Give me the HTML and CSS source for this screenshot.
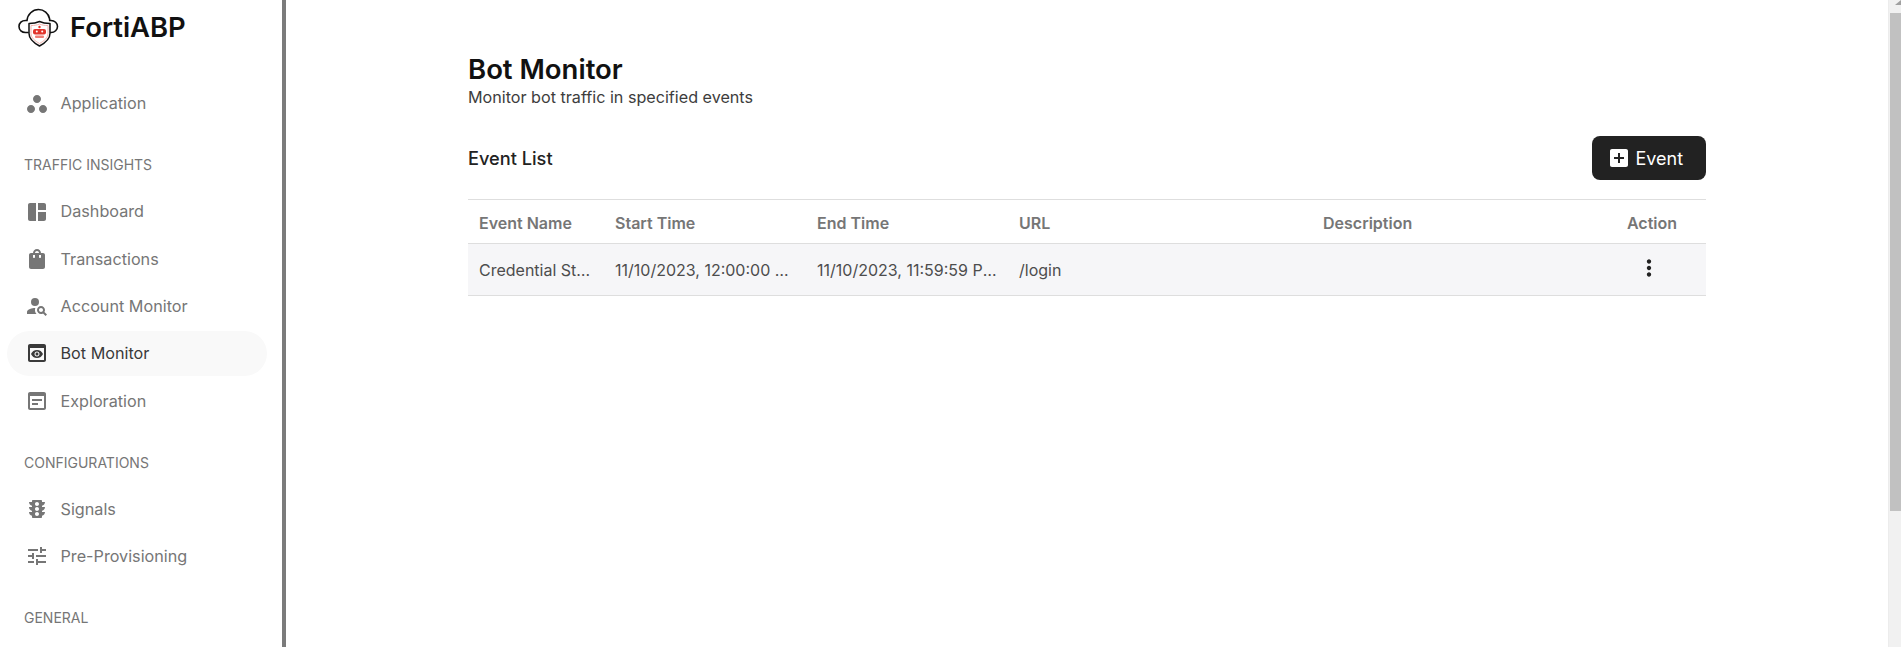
FILE: index.html
```html
<!DOCTYPE html>
<html lang="en">
<head>
<meta charset="utf-8">
<title>FortiABP - Bot Monitor</title>
<link rel="stylesheet" href="styles.css">
</head>
<body>
<div class="app">
  <aside class="sidebar">
    <div class="brand">
      <svg class="brand-logo" viewBox="0 0 41 39">
        <path class="cloud" d="M10 24.500H7.500C3.800 24.500 1 22 1 18.500S3.800 12.500 7.500 12.500H9C9.500 6.500 14.500 1.500 20.500 1.500c5.500 0 10 3.800 11 9 .1.700.2 1.300.2 2H33c3.700 0 6.500 2.700 6.500 6s-2.800 6-6.500 6h-.5"/>
        <path class="shield" d="M11 15.500c4 0 7.500-.5 10.500-2 3 1.500 6.500 2 10.500 2v10c0 5.500-5 9.500-10.500 12.500C16 35 11 31 11 25.500z"/>
        <path class="shield-inner" d="M13 17.500c3.500 0 6-.4 8.500-1.500 2.500 1.100 5 1.500 8.500 1.500v8c0 4.300-4 7.500-8.500 10-4.500-2.500-8.500-5.700-8.500-10z"/>
        <rect class="bot" x="15" y="21" width="13" height="5.500" rx="2"/>
        <circle class="bot" cx="21.500" cy="19" r="1.200"/>
        <rect class="bot-chin" x="17" y="27.500" width="9" height="2.600" rx="1"/>
        <circle class="bot-eye" cx="18.800" cy="23.500" r="1"/>
        <circle class="bot-eye" cx="24.200" cy="23.500" r="1"/>
      </svg>
      <span class="brand-name">FortiABP</span>
    </div>

    <nav class="nav">
      <a class="nav-item">
        <svg class="nav-icon" viewBox="0 0 24 24"><path d="M6 13c-2.200 0-4 1.800-4 4s1.800 4 4 4 4-1.800 4-4-1.800-4-4-4zm12 0c-2.200 0-4 1.800-4 4s1.800 4 4 4 4-1.800 4-4-1.800-4-4-4zm-6-10C9.800 3 8 4.800 8 7s1.800 4 4 4 4-1.800 4-4-1.800-4-4-4z"/></svg>
        <span>Application</span>
      </a>

      <div class="nav-heading">TRAFFIC INSIGHTS</div>
      <a class="nav-item">
        <svg class="nav-icon" viewBox="0 0 24 24"><path d="M11 21H5c-1.100 0-2-.9-2-2V5c0-1.100.9-2 2-2h6v18zm2 0h6c1.100 0 2-.9 2-2v-7h-8v9zm8-11V5c0-1.100-.9-2-2-2h-6v7h8z"/></svg>
        <span>Dashboard</span>
      </a>
      <a class="nav-item">
        <svg class="nav-icon" viewBox="0 0 24 24"><path d="M18 6h-2c0-2.210-1.790-4-4-4S8 3.790 8 6H6c-1.100 0-2 .9-2 2v12c0 1.100.9 2 2 2h12c1.100 0 2-.9 2-2V8c0-1.100-.9-2-2-2zm-8 4c0 .55-.45 1-1 1s-1-.45-1-1V8h2v2zm2-6c1.100 0 2 .9 2 2h-4c0-1.100.9-2 2-2zm4 6c0 .55-.45 1-1 1s-1-.45-1-1V8h2v2z"/></svg>
        <span>Transactions</span>
      </a>
      <a class="nav-item">
        <svg class="nav-icon" viewBox="0 0 24 24"><circle cx="10" cy="8" r="4"/><path d="M10.350 14.010C7.620 13.910 2 15.270 2 18v2h9.540c-2.470-2.760-1.230-5.890-1.190-5.990z"/><path d="M19.430 18.020c.36-.59.57-1.280.57-2.020 0-2.210-1.790-4-4-4s-4 1.790-4 4 1.790 4 4 4c.74 0 1.430-.22 2.020-.57L20.590 22 22 20.590l-2.570-2.570zM16 18c-1.100 0-2-.9-2-2s.9-2 2-2 2 .9 2 2-.9 2-2 2z"/></svg>
        <span>Account Monitor</span>
      </a>
      <a class="nav-item is-active">
        <svg class="nav-icon" viewBox="0 0 24 24"><path d="M19 3H5c-1.110 0-2 .9-2 2v14c0 1.100.89 2 2 2h14c1.100 0 2-.9 2-2V5c0-1.100-.89-2-2-2zm0 16H5V7h14v12zm-5.500-6c0 .83-.67 1.500-1.500 1.500s-1.500-.67-1.500-1.500.67-1.500 1.500-1.500 1.500.67 1.500 1.500zM12 9c-2.730 0-5.060 1.660-6 4 .94 2.340 3.270 4 6 4s5.060-1.660 6-4c-.94-2.340-3.270-4-6-4zm0 6.500c-1.380 0-2.500-1.120-2.500-2.500s1.120-2.500 2.500-2.500 2.500 1.120 2.500 2.500-1.120 2.500-2.500 2.500z"/></svg>
        <span>Bot Monitor</span>
      </a>
      <a class="nav-item">
        <svg class="nav-icon" viewBox="0 0 24 24"><path d="M19 3H5c-1.100 0-2 .9-2 2v14c0 1.100.9 2 2 2h14c1.100 0 2-.9 2-2V5c0-1.100-.9-2-2-2zm0 16H5V7h14v12zM7 10h10v2H7zm0 4h6v2H7z"/></svg>
        <span>Exploration</span>
      </a>

      <div class="nav-heading">CONFIGURATIONS</div>
      <a class="nav-item">
        <svg class="nav-icon" viewBox="0 0 24 24"><path d="M20 10h-3V8.860c1.720-.45 3-2 3-3.860h-3V4c0-.55-.45-1-1-1H8c-.55 0-1 .45-1 1v1H4c0 1.860 1.280 3.410 3 3.860V10H4c0 1.860 1.280 3.410 3 3.860V15H4c0 1.860 1.280 3.410 3 3.860V20c0 .55.45 1 1 1h8c.55 0 1-.45 1-1v-1.140c1.720-.45 3-2 3-3.860h-3v-1.140c1.720-.45 3-2 3-3.860zm-8 9c-1.110 0-2-.9-2-2s.89-2 2-2c1.100 0 2 .9 2 2s-.89 2-2 2zm0-5c-1.110 0-2-.9-2-2s.89-2 2-2c1.100 0 2 .9 2 2s-.89 2-2 2zm0-5c-1.110 0-2-.9-2-2 0-1.110.89-2 2-2 1.100 0 2 .89 2 2 0 1.100-.89 2-2 2z"/></svg>
        <span>Signals</span>
      </a>
      <a class="nav-item">
        <svg class="nav-icon" viewBox="0 0 24 24"><path d="M3 17v2h6v-2H3zM3 5v2h10V5H3zm10 16v-2h8v-2h-8v-2h-2v6h2zM7 9v2H3v2h4v2h2V9H7zm14 4v-2H11v2h10zm-6-4h2V7h4V5h-4V3h-2v6z"/></svg>
        <span>Pre-Provisioning</span>
      </a>

      <div class="nav-heading">GENERAL</div>
    </nav>
  </aside>

  <main class="main">
    <div class="content">
      <header class="page-head">
        <h1 class="page-title">Bot Monitor</h1>
        <p class="page-subtitle">Monitor bot traffic in specified events</p>
      </header>

      <div class="list-bar">
        <h2 class="list-title">Event List</h2>
        <button class="btn-add" type="button">
          <svg class="btn-icon" viewBox="0 0 24 24"><path d="M19 3H5c-1.110 0-2 .9-2 2v14c0 1.100.89 2 2 2h14c1.100 0 2-.9 2-2V5c0-1.100-.9-2-2-2zm-2 10h-4v4h-2v-4H7v-2h4V7h2v4h4v2z"/></svg>
          <span>Event</span>
        </button>
      </div>

      <table class="events">
        <colgroup>
          <col class="col-name"><col class="col-time"><col class="col-time"><col class="col-url"><col class="col-desc"><col class="col-action">
        </colgroup>
        <thead>
          <tr>
            <th>Event Name</th>
            <th>Start Time</th>
            <th>End Time</th>
            <th>URL</th>
            <th>Description</th>
            <th class="cell-action">Action</th>
          </tr>
        </thead>
        <tbody>
          <tr>
            <td>Credential Stuffing Event</td>
            <td>11/10/2023, 12:00:00 AM</td>
            <td>11/10/2023, 11:59:59 PM</td>
            <td>/login</td>
            <td></td>
            <td class="cell-action">
              <svg class="more-icon" viewBox="0 0 24 24"><path d="M12 8c1.100 0 2-.9 2-2s-.9-2-2-2-2 .9-2 2 .9 2 2 2zm0 2c-1.100 0-2 .9-2 2s.9 2 2 2 2-.9 2-2-.9-2-2-2zm0 6c-1.100 0-2 .9-2 2s.9 2 2 2 2-.9 2-2-.9-2-2-2z"/></svg>
            </td>
          </tr>
        </tbody>
      </table>
    </div>
  </main>

  <div class="scrollbar" aria-hidden="true">
    <div class="scroll-arrow"></div>
    <div class="scroll-thumb"></div>
  </div>
</div>
</body>
</html>
```

FILE: styles.css
```css
* { box-sizing: border-box; }

html, body {
  margin: 0;
  height: 100%;
  overflow: hidden;
  background: #fff;
  font-family: Inter, "Noto Sans", sans-serif;
  color: #111;
}

.app {
  display: flex;
  height: 647px;
}

.sidebar {
  flex: 0 0 286px;
  height: 100%;
  overflow: hidden;
  border-right: 4px solid #7b7b7b;
  background: #fff;
}

.brand {
  display: flex;
  align-items: center;
  gap: 11px;
  height: 47px;
  padding: 7px 0 0 18px;
}

.brand-logo {
  width: 41px;
  height: 39px;
  flex: none;
}

.cloud { fill: none; stroke: #111; stroke-width: 1.6; stroke-linecap: round; }
.shield { fill: #fff; stroke: #111; stroke-width: 1.5; stroke-linejoin: round; }
.shield-inner { fill: #fff; stroke: #f3b3ae; stroke-width: 1; }
.bot { fill: #e2352c; }
.bot-chin { fill: #ee7d76; }
.bot-eye { fill: #fff; }

.brand-name {
  font-size: 27.4px;
  font-weight: 600;
  color: #111;
}

.nav {
  display: flex;
  flex-direction: column;
  gap: 2.3px;
  padding: 34px 15px 0 7px;
}

.nav-item {
  display: flex;
  align-items: center;
  gap: 11.5px;
  height: 45px;
  padding-left: 18px;
  border-radius: 23px;
  color: #767676;
  font-size: 16.2px;
  line-height: 1;
}

.nav-item.is-active {
  background: #f9f9f9;
  color: #3a3a3a;
}

.nav-icon {
  width: 24px;
  height: 24px;
  flex: none;
  fill: currentColor;
}

.nav-heading {
  padding: 28px 0 13.5px 17px;
  font-size: 14px;
  line-height: 17px;
  color: #767676;
}

.main {
  flex: 1;
  min-width: 0;
  padding: 0 182px;
}

.content {
  display: flex;
  flex-direction: column;
}

.page-head {
  padding-top: 51px;
}

.page-title {
  margin: 0;
  font-size: 27.5px;
  line-height: 36px;
  font-weight: 600;
  color: #111;
}

.page-subtitle {
  margin: 0;
  font-size: 16.15px;
  line-height: 20px;
  color: #3d3d3d;
}

.list-bar {
  display: flex;
  justify-content: space-between;
  align-items: center;
  margin-top: 29px;
  height: 44px;
}

.list-title {
  margin: 0;
  font-size: 18.2px;
  font-weight: 500;
  color: #222;
}

.btn-add {
  display: flex;
  align-items: center;
  gap: 4.5px;
  width: 114px;
  height: 44px;
  padding: 0 0 0 15px;
  border: 0;
  border-radius: 8px;
  background: #222;
  color: #fff;
  font-family: inherit;
  font-size: 18px;
}

.btn-icon {
  width: 24px;
  height: 24px;
  flex: none;
  fill: #fff;
}

.events {
  width: 100%;
  margin-top: 19px;
  table-layout: fixed;
  border-collapse: collapse;
  border-top: 1px solid #dedede;
  font-size: 16px;
}

.col-name { width: 136px; }
.col-time { width: 202px; }
.col-url { width: 304px; }
.col-action { width: 108px; }

.events th {
  height: 44px;
  padding: 3px 11px 0;
  text-align: left;
  font-weight: 600;
  color: #767676;
  border-bottom: 1px solid #dedede;
}

.events td {
  height: 52px;
  padding: 1px 11px 0;
  background: #f6f6f8;
  color: #4d4d4d;
  border-bottom: 1px solid #dedede;
  white-space: nowrap;
  overflow: hidden;
  text-overflow: ellipsis;
}

.events .cell-action {
  padding-left: 0;
  padding-right: 0;
  text-align: center;
}

.more-icon {
  display: block;
  width: 26px;
  height: 26px;
  margin: -4px 44px 0 auto;
  fill: #222;
}

.scrollbar {
  flex: 0 0 13px;
  position: relative;
  background: #f1f1f1;
  border-left: 1px solid #ececec;
}

.scroll-arrow {
  position: absolute;
  top: 0;
  right: 0;
  width: 0;
  height: 0;
  border-left: 6px solid transparent;
  border-bottom: 5px solid #a0a0a0;
}

.scroll-thumb {
  position: absolute;
  top: 13px;
  left: 1px;
  right: 0;
  height: 498px;
  background: #c1c1c1;
}
```
